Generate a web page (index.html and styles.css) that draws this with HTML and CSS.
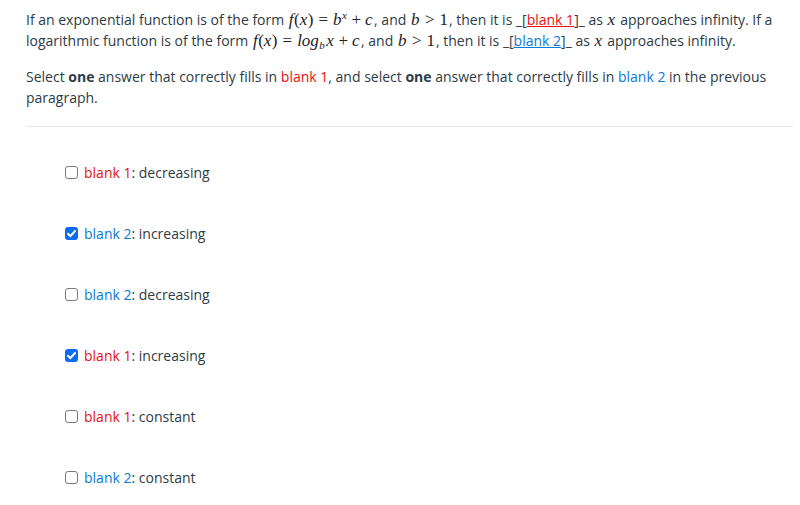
FILE: index.html
```html
<!DOCTYPE html>
<html>
<head>
<meta charset="utf-8">
<link rel="stylesheet" href="styles.css">
</head>
<body>
<div class="page">
  <p class="para">If an exponential function is of the form <span class="m"><i>f</i>(<i>x</i>)<span class="rel">=</span><i>b</i><sup><i>x</i></sup><span class="bin">+</span><i>c</i></span>, and <span class="m"><i>b</i><span class="rel">&gt;</span>1</span>, then it is _[<span class="b1 u">blank 1</span>]_ as <span class="m"><i>x</i></span> approaches infinity. If a logarithmic function is of the form <span class="m"><i>f</i>(<i>x</i>)<span class="rel">=</span><i>log</i><sub><i>b</i></sub><i>x</i><span class="bin">+</span><i>c</i></span>, and <span class="m"><i>b</i><span class="rel">&gt;</span>1</span>, then it is _[<span class="b2 u">blank 2</span>]_ as <span class="m"><i>x</i></span> approaches infinity.</p>
  <p class="para second">Select <b>one</b> answer that correctly fills in <span class="b1">blank 1</span>, and select <b>one</b> answer that correctly fills in <span class="b2">blank 2</span> in the previous paragraph.</p>
  <hr class="rule">
  <ul class="options">
    <li class="opt"><span class="box"></span><span class="b1">blank 1</span>: decreasing</li>
    <li class="opt"><span class="box on"><svg viewBox="0 0 13 13" width="13" height="13"><path d="M3 6.8 L5.4 9.2 L10 4" fill="none" stroke="#fff" stroke-width="2" stroke-linecap="round" stroke-linejoin="round"/></svg></span><span class="b2">blank 2</span>: increasing</li>
    <li class="opt"><span class="box"></span><span class="b2">blank 2</span>: decreasing</li>
    <li class="opt"><span class="box on"><svg viewBox="0 0 13 13" width="13" height="13"><path d="M3 6.8 L5.4 9.2 L10 4" fill="none" stroke="#fff" stroke-width="2" stroke-linecap="round" stroke-linejoin="round"/></svg></span><span class="b1">blank 1</span>: increasing</li>
    <li class="opt"><span class="box"></span><span class="b1">blank 1</span>: constant</li>
    <li class="opt"><span class="box"></span><span class="b2">blank 2</span>: constant</li>
  </ul>
</div>
</body>
</html>
```

FILE: styles.css
```css
html, body {
  margin: 0;
  padding: 0;
  background: #fff;
}
body {
  font-family: "Open Sans", "Liberation Sans", sans-serif;
  font-size: 14px;
  line-height: 21px;
  color: #2d3b45;
}
.page {
  padding: 9px 7px 0 26px;
}
.para {
  margin: 0;
}
.second {
  margin-top: 15px;
}
.m {
  font-family: "Liberation Serif", "DejaVu Serif", serif;
  font-size: 17px;
  line-height: 1;
  color: #222;
  margin: 0 1px;
}
.m i {
  margin-right: 0.5px;
}
.rel {
  margin: 0 5px;
}
.bin {
  margin: 0 4px;
}
.m sup, .m sub {
  font-size: 11px;
  line-height: 0;
}
.m sup { vertical-align: 6px; }
.m sub { vertical-align: -3px; margin-right: 1px; }
b {
  font-weight: 700;
}
.b1 {
  color: #e81010;
}
.b2 {
  color: #0a78d8;
}
.u {
  text-decoration: underline;
}
.rule {
  border: 0;
  border-top: 1px solid #e6e6e6;
  margin: 18px 0 0 0;
  height: 0;
}
.options {
  list-style: none;
  margin: 35px 0 0 0;
  padding: 0 0 0 39px;
}
.opt {
  display: flex;
  align-items: center;
  height: 21px;
  margin-bottom: 40px;
}
.box {
  box-sizing: border-box;
  width: 13px;
  height: 13px;
  border: 1px solid #7a7a7a;
  border-radius: 3px;
  margin-right: 6px;
  display: inline-flex;
  flex: none;
  background: #fff;
}
.box.on {
  border: 0;
  background: #0b6cf2;
}
.box svg {
  display: block;
}
```
